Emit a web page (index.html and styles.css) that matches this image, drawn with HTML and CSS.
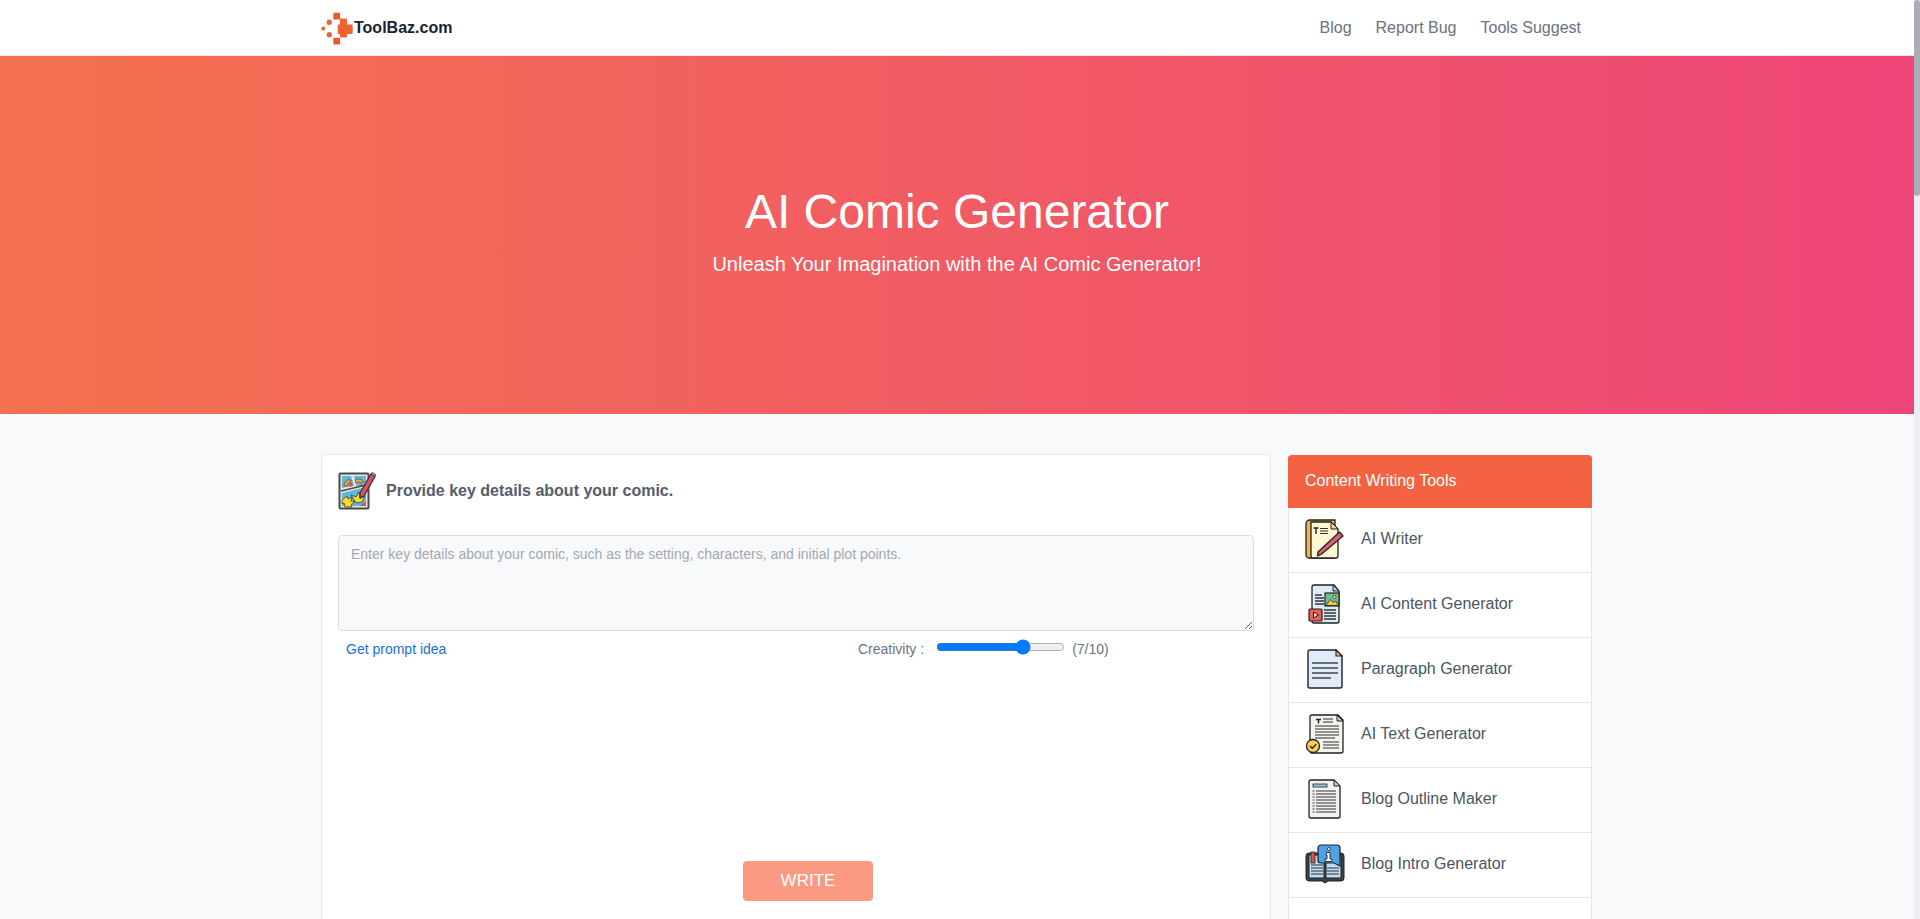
FILE: index.html
```html
<!DOCTYPE html>
<html lang="en">
<head>
<meta charset="utf-8">
<title>AI Comic Generator - ToolBaz</title>
<link rel="stylesheet" href="styles.css">
</head>
<body>
<div class="page">
  <div class="viewport">
    <header class="topbar">
      <div class="container topbar-row">
        <a class="brand" href="#">
          <svg class="brand-mark" viewBox="0 0 36 36" aria-hidden="true">
            <rect x="12.300" y="2.800" width="6.800" height="6.800" rx="1.200" fill="#e9592b"/>
            <rect x="19" y="8.500" width="7" height="19" rx="1" fill="#f0622d"/>
            <rect x="16.700" y="14.500" width="15" height="9.500" rx="1" fill="#f0622d"/>
            <rect x="12.300" y="27.800" width="6.800" height="6.800" rx="1.200" fill="#e9592b"/>
            <circle cx="8.300" cy="12.200" r="2.700" fill="#e3683f"/>
            <circle cx="8.300" cy="24.800" r="2.700" fill="#e3683f"/>
            <circle cx="2.300" cy="18.500" r="2" fill="#e3683f"/>
          </svg>
          <span>ToolBaz.com</span>
        </a>
        <nav class="nav">
          <a href="#">Blog</a>
          <a href="#">Report Bug</a>
          <a href="#">Tools Suggest</a>
        </nav>
      </div>
    </header>

    <section class="hero">
      <h1>AI Comic Generator</h1>
      <p>Unleash Your Imagination with the AI Comic Generator!</p>
    </section>

    <main class="container layout">
      <section class="card">
        <div class="card-head">
          <svg class="icon" viewBox="0 0 40 40" aria-hidden="true">
            <rect x="1.500" y="2.500" width="29" height="35" rx="1" fill="#e8e8e4" stroke="#4a4a4a" stroke-width="2"/>
            <path d="M4 5h9l3 9-12 3z" fill="#5fb9d6"/>
            <path d="M16 5h12v8l-10 2z" fill="#5fb9d6"/>
            <path d="M6 15c0-5 4-7 7-6l-1 3c-2 0-3 1-3 3z" fill="#f2a52a" stroke="#3d3d3d" stroke-width=".6"/>
            <path d="M17 9c3-2 7-1 9 2l-3 1c-1-1-3-1-5 0z" fill="#f2a52a" stroke="#3d3d3d" stroke-width=".6"/>
            <path d="M10 16l3-5 2.500 4z" fill="#d9534f"/>
            <path d="M20 15l4-2 1 2z" fill="#d9534f"/>
            <path d="M3 20l25-6" stroke="#4a4a4a" stroke-width="1.600" fill="none"/>
            <path d="M4 22l24-6v19H4z" fill="#5fb9d6"/>
            <path d="M4 29l5-4 1 3 4-2-1 4 4 1-4 3 1 2H7l-1-4-2 1z" fill="#f4dc28" stroke="#3d3d3d" stroke-width=".8"/>
            <path d="M13 24l5 2 3-5 1 6 5-2-3 6-5 1-3-3z" fill="#f4dc28" stroke="#3d3d3d" stroke-width=".8"/>
            <path d="M22 35l6-5v5z" fill="#d9534f"/>
            <path d="M22 22L33 3l4 2.500L26 25l-4 2z" fill="#d9535f" stroke="#3a3a3a" stroke-width="1.400" stroke-linejoin="round"/>
            <path d="M33 3l1-1.500 3.500 2-.5 1.500z" fill="#e8e8e8" stroke="#3a3a3a"/>
          </svg>
          <h2>Provide key details about your comic.</h2>
        </div>
        <textarea class="prompt" placeholder="Enter key details about your comic, such as the setting, characters, and initial plot points."></textarea>
        <div class="controls">
          <a class="idea" href="#">Get prompt idea</a>
          <div class="creativity">
            <label for="creativity">Creativity :</label>
            <input id="creativity" type="range" min="0" max="10" value="7">
            <span>(7/10)</span>
          </div>
        </div>
        <div class="actions">
          <button class="write" type="button">WRITE</button>
        </div>
      </section>

      <aside class="tools">
        <h3>Content Writing Tools</h3>
        <ul>
          <li>
            <svg class="icon" viewBox="0 0 40 40" aria-hidden="true">
              <path d="M5 1h25v36a2 2 0 0 1-2 2H4a3 3 0 0 1-3-3V5a4 4 0 0 1 4-4z" fill="#f3b44f" stroke="#222" stroke-width="1.300"/>
              <path d="M6 3h20l7 7v27a2 2 0 0 1-2 2H8a2 2 0 0 1-2-2z" fill="#fdf7d2" stroke="#222" stroke-width="1.300"/>
              <path d="M26 3v7h7z" fill="#f3d98f" stroke="#222" stroke-width="1"/>
              <path d="M8.500 9h5M11 9v6" stroke="#222" stroke-width="1.400" fill="none"/>
              <path d="M15 9.500h8M15 12h8M15 14.500h8" stroke="#333" stroke-width="1.100" fill="none"/>
              <path d="M13 33l-.5 4 3.500-1.500L38 17l-3.500-4z" fill="#e0616d" stroke="#222" stroke-width="1.300" stroke-linejoin="round"/>
              <path d="M12.500 37l.5-3 2.500 1.500z" fill="#444"/>
            </svg>
            <span>AI Writer</span>
          </li>
          <li>
            <svg class="icon" viewBox="0 0 40 40" aria-hidden="true">
              <path d="M9 1h20l5 6v30a2 2 0 0 1-2 2H9a2 2 0 0 1-2-2V3a2 2 0 0 1 2-2z" fill="#dcecf8" stroke="#222" stroke-width="1.300"/>
              <path d="M28 1v6h6z" fill="#a7d3ec" stroke="#222"/>
              <path d="M10 11h7M10 14h9M10 17h9M10 20h9" stroke="#333" stroke-width="1.300" fill="none"/>
              <rect x="20" y="9" width="14" height="13" fill="#6cc08f" stroke="#222" stroke-width="1.200"/>
              <path d="M20.500 21.500l5-6 3 3 2-1.500 3 4.500z" fill="#f3c644" stroke="#222" stroke-width=".8"/>
              <circle cx="29.500" cy="13" r="1.600" fill="#f8e8a0" stroke="#222" stroke-width=".7"/>
              <path d="M19 26h12M19 29h12M19 32h12M19 35h12" stroke="#333" stroke-width="1.300" fill="none"/>
              <rect x="4" y="25" width="13" height="12" rx="1" fill="#ea6153" stroke="#222" stroke-width="1.200"/>
              <path d="M8.500 28v6l5-3z" fill="#fbe3d6" stroke="#222" stroke-width="1"/>
            </svg>
            <span>AI Content Generator</span>
          </li>
          <li>
            <svg class="icon" viewBox="0 0 40 40" aria-hidden="true">
              <path d="M5 1h26l6 6v30a2 2 0 0 1-2 2H5a2 2 0 0 1-2-2V3a2 2 0 0 1 2-2z" fill="#dfeafa" stroke="#222" stroke-width="1.400"/>
              <path d="M31 1v6h6z" fill="#f1b87a" stroke="#222" stroke-width="1.100"/>
              <path d="M7 14h26M7 19h26M7 24h26M7 29h19" stroke="#444" stroke-width="1.500" fill="none"/>
            </svg>
            <span>Paragraph Generator</span>
          </li>
          <li>
            <svg class="icon" viewBox="0 0 40 40" aria-hidden="true">
              <path d="M7 1h26l5 5v31a2 2 0 0 1-2 2H7a2 2 0 0 1-2-2V3a2 2 0 0 1 2-2z" fill="#f3f3ef" stroke="#222" stroke-width="1.300"/>
              <path d="M32 1v6h6z" fill="#b5d5cb" stroke="#222"/>
              <path d="M11 5.500h5M13.500 5.500v4" stroke="#222" stroke-width="1.400" fill="none"/>
              <path d="M18 5h10M18 8h10M10 12h24M10 15h24M10 18h24M10 21h24M10 24h20M18 28h16M18 31h16M18 34h16" stroke="#333" stroke-width="1.200" fill="none"/>
              <circle cx="8" cy="32" r="6.500" fill="#f5cf58" stroke="#222" stroke-width="1.300"/>
              <path d="M5 32l2.300 2.300 4-4" stroke="#222" stroke-width="1.300" fill="none"/>
            </svg>
            <span>AI Text Generator</span>
          </li>
          <li>
            <svg class="icon" viewBox="0 0 40 40" aria-hidden="true">
              <path d="M6 1h23l6 6v30a2 2 0 0 1-2 2H6a2 2 0 0 1-2-2V3a2 2 0 0 1 2-2z" fill="#f2f2f2" stroke="#222" stroke-width="1.300"/>
              <path d="M29 1v6h6z" fill="#b8d6cc" stroke="#222"/>
              <rect x="8" y="5" width="14" height="3" fill="#8fcbe6" stroke="#222" stroke-width=".8"/>
              <path d="M11 12h20M11 15h20M11 18h20M11 21h20M11 24h20M11 27h20M11 30h20M11 33h20" stroke="#333" stroke-width="1.200" fill="none"/>
              <path d="M7.500 12h2M7.500 15h2M7.500 18h2M7.500 21h2M7.500 24h2M7.500 27h2M7.500 30h2M7.500 33h2" stroke="#333" stroke-width="1.200" fill="none"/>
            </svg>
            <span>Blog Outline Maker</span>
          </li>
          <li>
            <svg class="icon" viewBox="0 0 40 40" aria-hidden="true">
              <path d="M4 9h32a3 3 0 0 1 3 3v22a3 3 0 0 1-3 3H23l-3 2-3-2H4a3 3 0 0 1-3-3V12a3 3 0 0 1 3-3z" fill="#3c4048" stroke="#222"/>
              <path d="M4 11h15v23H4zM21 11h15v23H21z" fill="#bcdcf2" stroke="#222"/>
              <path d="M6 21h12M6 24h12M6 27h12M6 30h12M22 24h12M22 27h12M22 30h12" stroke="#333" stroke-width="1.200" fill="none"/>
              <rect x="6" y="8" width="4" height="11" fill="#d9534f" stroke="#222" stroke-width=".8"/>
              <path d="M16 1h16a3 3 0 0 1 3 3v18l-6-3H16a3 3 0 0 1-3-3V4a3 3 0 0 1 3-3z" fill="#4ba3e8" stroke="#222" stroke-width="1.200"/>
              <circle cx="24" cy="5" r="1.500" fill="#fff" stroke="#222" stroke-width=".8"/>
              <path d="M21.500 8.500h3.500v6.500h2v2.500h-7V15h2v-4h-1z" fill="#fff" stroke="#222" stroke-width=".9"/>
            </svg>
            <span>Blog Intro Generator</span>
          </li>
          <li></li>
        </ul>
      </aside>
    </main>
  </div>
  <div class="scrollbar"><div class="scrollbar-thumb"></div></div>
</div>
</body>
</html>
```
FILE: styles.css
```css
* { box-sizing: border-box; }

html, body {
  margin: 0;
  height: 100%;
  overflow: hidden;
}

body {
  font-family: "Liberation Sans", Arial, sans-serif;
  background: #f8f9fb;
  color: #4b5563;
}

a { text-decoration: none; color: inherit; }

.page {
  display: flex;
  height: 100vh;
}

.viewport {
  flex: 1;
  min-width: 0;
  overflow: hidden;
}

.scrollbar {
  flex: 0 0 6px;
  background: #eceef1;
}

.scrollbar-thumb {
  height: 196px;
  background: #a8adb7;
  border-radius: 3px;
}

.container {
  width: 1271px;
  margin-left: 321px;
}

.topbar {
  height: 56px;
  background: #fff;
  border-bottom: 1px solid #e8e8ea;
}

.topbar-row {
  display: flex;
  align-items: center;
  justify-content: space-between;
  height: 55px;
  padding-right: 11px;
}

.brand {
  display: flex;
  align-items: center;
  font-size: 16px;
  font-weight: 700;
  color: #1a2238;
}

.brand-mark {
  width: 36px;
  height: 36px;
  margin-right: -3px;
}

.nav {
  display: flex;
  gap: 24px;
  font-size: 16px;
  color: #6b7280;
}

.hero {
  height: 358px;
  padding-top: 129px;
  background: linear-gradient(90deg, #f4724f 0%, #ee4578 100%);
  color: #fff;
  text-align: center;
}

.hero h1 {
  margin: 0 0 11px;
  font-size: 48px;
  line-height: 54px;
  font-weight: 400;
}

.hero p {
  margin: 0;
  font-size: 20px;
  line-height: 28px;
}

.layout {
  display: flex;
  align-items: flex-start;
  gap: 17px;
  padding-top: 40px;
}

.card {
  flex: 0 0 949px;
  min-height: 800px;
  padding: 16px;
  background: #fff;
  border: 1px solid #e5e7eb;
  border-radius: 4px;
}

.card-head {
  display: flex;
  align-items: center;
  gap: 8px;
  margin-bottom: 24px;
}

.icon {
  flex: none;
  width: 40px;
  height: 40px;
}

.card-head h2 {
  margin: 0;
  font-size: 16px;
  line-height: 24px;
  font-weight: 700;
  color: #555d6b;
}

.prompt {
  display: block;
  width: 916px;
  height: 96px;
  padding: 8px 12px;
  font: 14px/20px "Liberation Sans", Arial, sans-serif;
  color: #4b5563;
  background: #f8f9fb;
  border: 1px solid #d9dce1;
  border-radius: 4px;
  outline: none;
}

.prompt::placeholder { color: #a3a8b2; opacity: 1; }

.controls {
  display: grid;
  grid-template-columns: 520px 1fr;
  height: 31px;
  font-size: 14px;
}

.idea {
  padding: 8px 0 0 8px;
  line-height: 20px;
  color: #1a6fd6;
}

.creativity {
  display: flex;
  align-items: flex-start;
  line-height: 20px;
  padding-top: 8px;
  color: #6b7280;
}

.creativity input {
  width: 129px;
  height: 16px;
  margin: 0 0 0 12px;
  accent-color: #007bff;
}

.creativity span { margin-left: 7px; }

.actions {
  padding: 199px 0 0 405px;
}

.write {
  display: block;
  width: 130px;
  height: 40px;
  padding: 0;
  font: 17px "Liberation Sans", Arial, sans-serif;
  color: #fff;
  background: #fa9a82;
  border: 0;
  border-radius: 4px;
}

.tools {
  flex: 0 0 304px;
  margin-top: 1px;
  background: #fff;
  border: 1px solid #e5e7eb;
  border-top: 0;
  border-radius: 4px 4px 0 0;
}

.tools h3 {
  margin: 0 -1px;
  height: 53px;
  padding: 0 17px;
  font-size: 16px;
  line-height: 51px;
  font-weight: 400;
  color: #fff;
  background: #f36241;
  border-radius: 4px 4px 0 0;
}

.tools ul {
  margin: 0;
  padding: 0;
  list-style: none;
}

.tools li {
  display: flex;
  align-items: center;
  gap: 16px;
  height: 65px;
  padding: 0 16px 2px;
  font-size: 16px;
  color: #4b5563;
  border-bottom: 1px solid #e5e7eb;
}
```
